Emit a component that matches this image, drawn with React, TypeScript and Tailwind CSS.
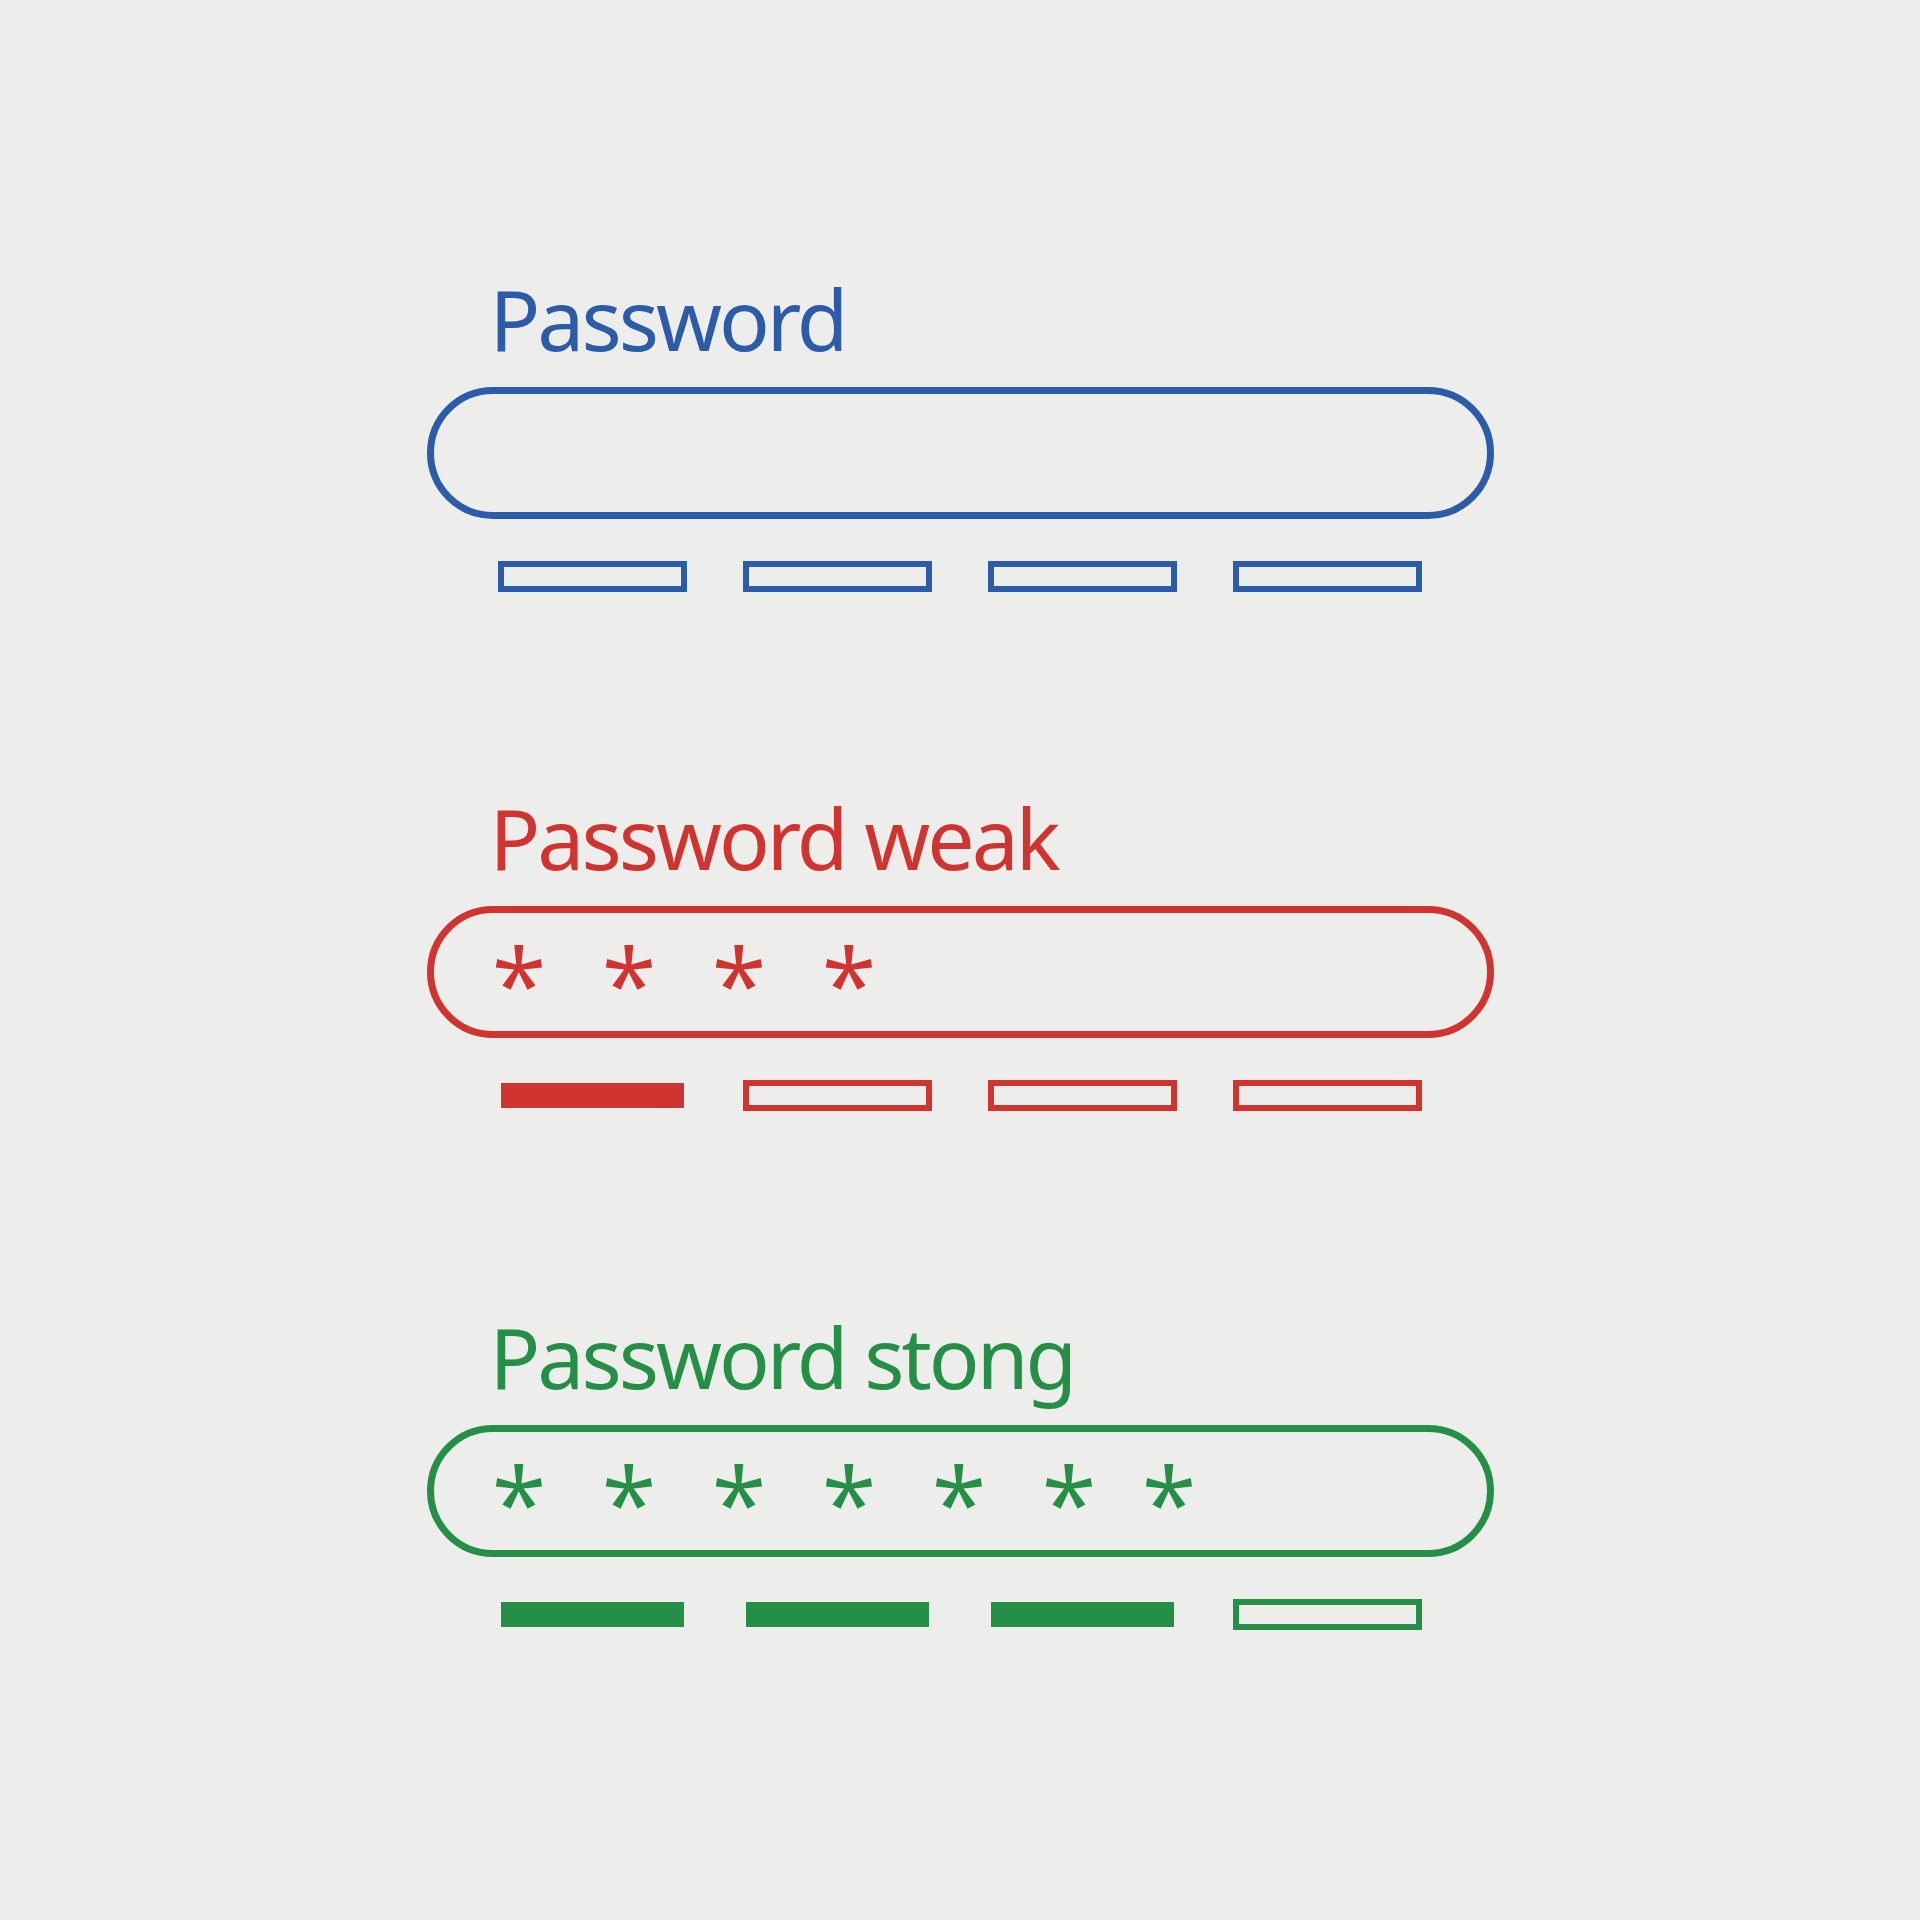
type Field = {
  label: string;
  color: string;
  border: string;
  fill: string;
  mask: number[];
  filled: number;
};

const fields: Field[] = [
  {
    label: "Password",
    color: "text-[#2c5ba8]",
    border: "border-[#2c5ba8]",
    fill: "bg-[#2c5ba8]",
    mask: [],
    filled: 0,
  },
  {
    label: "Password weak",
    color: "text-[#cf3431]",
    border: "border-[#cf3431]",
    fill: "bg-[#cf3431]",
    mask: [110, 110, 110, 110],
    filled: 1,
  },
  {
    label: "Password stong",
    color: "text-[#258f47]",
    border: "border-[#258f47]",
    fill: "bg-[#258f47]",
    mask: [110, 110, 110, 110, 110, 100, 110],
    filled: 3,
  },
];

function StrengthField({ field }: { field: Field }) {
  return (
    <div className="flex w-[1067px] flex-col">
      <p
        className={`pl-[63px] text-[84px] leading-none tracking-[-3px] ${field.color}`}
        style={{ fontFamily: "'Noto Sans', 'Open Sans', sans-serif" }}
      >
        {field.label}
      </p>
      <div
        className={`mt-[26px] flex h-[132px] items-center rounded-[66px] border-[7px] pl-[58px] ${field.border} ${field.color}`}
      >
        {field.mask.map((w, i) => (
          <span
            key={i}
            className="translate-y-[11px] text-[100px] leading-none"
            style={{ width: w, fontFamily: "'Open Sans', sans-serif" }}
          >
            *
          </span>
        ))}
      </div>
      <div className="mt-[42px] flex gap-[56px] pl-[71px]">
        {[0, 1, 2, 3].map((i) =>
          i < field.filled ? (
            <div
              key={i}
              className={`h-[31px] w-[189px] bg-clip-content p-[3px] ${field.fill}`}
            />
          ) : (
            <div
              key={i}
              className={`h-[31px] w-[189px] border-[6px] ${field.border}`}
            />
          ),
        )}
      </div>
    </div>
  );
}

export default function App() {
  return (
    <div className="flex h-[1920px] w-full flex-col items-center gap-[204px] bg-[#ededeb] pt-[277px]">
      {fields.map((f) => (
        <StrengthField key={f.label} field={f} />
      ))}
    </div>
  );
}
